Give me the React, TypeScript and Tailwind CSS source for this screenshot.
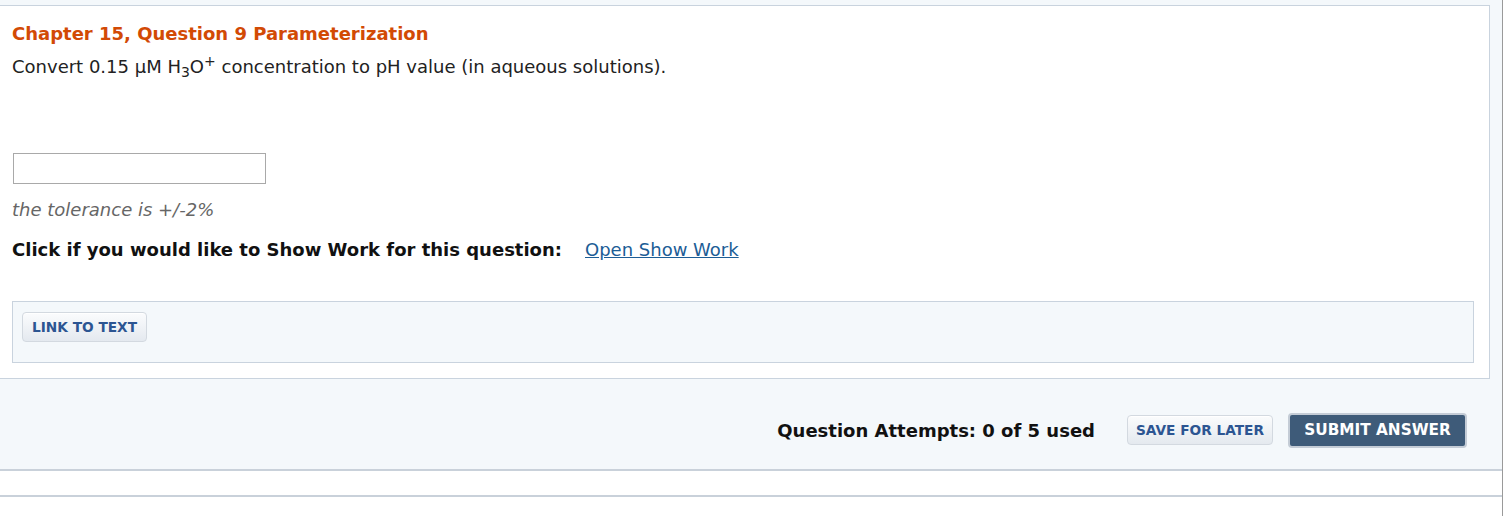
const verdana = "font-['DejaVu_Sans',Verdana,sans-serif]";

const lightButton =
  "h-[30px] rounded-[4px] border border-[#d3d9e0] bg-gradient-to-b from-[#fbfcfd] to-[#e4e9ef] text-[13.7px] font-bold text-[#2c5592] shadow-[inset_0_1px_0_#fff]";

export default function App() {
  return (
    <div className={`${verdana} h-[516px] w-full overflow-hidden bg-white`}>
      <div className="flex h-full border-r border-[#9a9a9a]">
        <div className="flex w-full flex-col">
          <div className="bg-[#f4f8fb] pt-[5px]">
            <div className="mr-[12px] h-[374px] border-y border-r border-[#c9d3de] bg-white px-3 pt-[16px]">
              <h2 className="text-[18px] font-bold leading-[24px] text-[#d24a05]">
                Chapter 15, Question 9 Parameterization
              </h2>
              <p className="mt-[9px] text-[18px] leading-[24px] text-[#222]">
                Convert 0.15 μM H
                <sub className="text-[14px]">3</sub>O
                <sup className="text-[14px]">+</sup> concentration to pH value
                (in aqueous solutions).
              </p>
              <input
                type="text"
                className="mt-[74px] ml-px block h-[31px] w-[253px] border border-[#a9a9a9] bg-white outline-none"
              />
              <p className="mt-[14px] text-[18px] italic leading-[24px] text-[#666]">
                the tolerance is +/-2%
              </p>
              <div className="mt-[16px] flex items-center text-[18px] leading-[24px]">
                <span className="font-bold text-[#111]">
                  Click if you would like to Show Work for this question:
                </span>
                <a href="#" className="ml-[23px] text-[#1c5d96] underline">
                  Open Show Work
                </a>
              </div>
              <div className="mt-[39px] mr-[3px] h-[62px] border border-[#c9d3de] bg-[#f4f8fb] px-[9px] pt-[10px]">
                <button type="button" className={`${lightButton} h-[29px] w-[125px]`}>
                  LINK TO TEXT
                </button>
              </div>
            </div>
            <div className="flex h-[92px] items-center justify-end border-b-2 border-[#c9d1da] pt-[12px] pr-[35px]">
              <span className="mr-[32px] text-[18px] font-bold text-[#111]">
                Question Attempts: 0 of 5 used
              </span>
              <button type="button" className={`${lightButton} mr-[15px] w-[146px]`}>
                SAVE FOR LATER
              </button>
              <button
                type="button"
                className="h-[35px] w-[179px] rounded-[4px] border-2 border-[#c4ccd6] bg-[#3e5b79] text-[15.3px] font-bold text-white"
              >
                SUBMIT ANSWER
              </button>
            </div>
          </div>
          <div className="h-[26px] border-b-2 border-[#c9d1da] bg-white" />
        </div>
      </div>
    </div>
  );
}
